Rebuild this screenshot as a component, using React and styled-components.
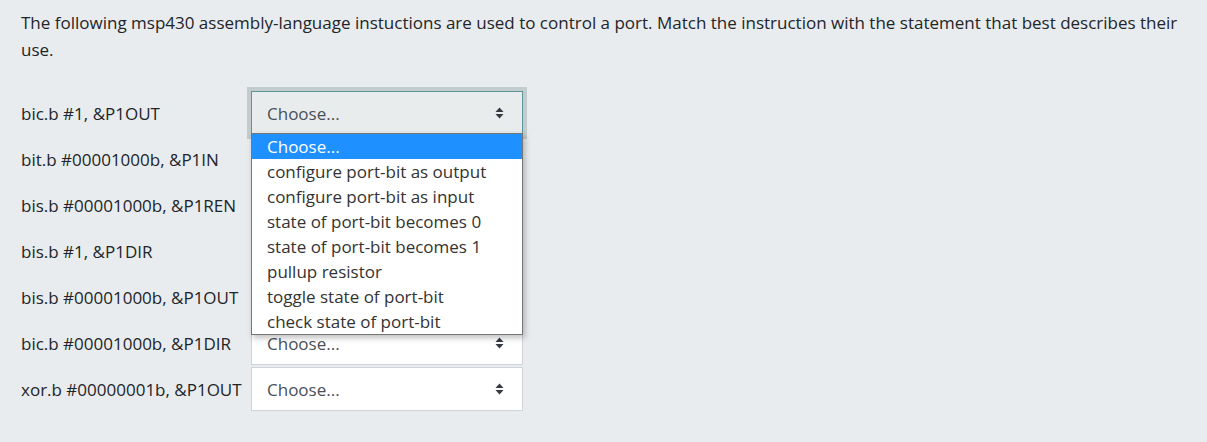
import React from "react";
import styled, { createGlobalStyle } from "styled-components";

const Global = createGlobalStyle`
  html, body { margin: 0; padding: 0; background: #e9ecef; }
  body { font-family: "Open Sans", "Noto Sans", sans-serif; color: #212529; }
`;

const Page = styled.div`
  width: 1207px;
  height: 442px;
  box-sizing: border-box;
  padding: 9px 21px 0 21px;
  background: #e9ecef;
  font-size: 17px;
  line-height: 27px;
  overflow: hidden;
`;

const Intro = styled.p`
  margin: 0 0 28px 0;
  color: #212529;
`;

const Grid = styled.div`
  position: relative;
  display: grid;
  grid-template-columns: 230px 272px;
  grid-auto-rows: 44px;
  row-gap: 2px;
  align-items: center;
`;

const Label = styled.div`
  color: #212529;
  white-space: nowrap;
`;

const SelectBox = styled.div`
  position: relative;
  box-sizing: border-box;
  height: 44px;
  display: flex;
  align-items: center;
  justify-content: space-between;
  padding: 0 18px 0 15px;
  border: 1px solid ${(p) => (p.$open ? "#5b969b" : "#ced4da")};
  background: ${(p) => (p.$open ? "#e9eced" : "#ffffff")};
  box-shadow: ${(p) => (p.$open ? "0 0 0 4px #c2cccd" : "none")};
  color: #495057;
  & > * {
    visibility: ${(p) => (p.$covered ? "hidden" : "visible")};
  }
`;

const Arrows = () => (
  <svg width="9" height="12" viewBox="0 0 9 12">
    <path d="M0.5 5 L4.5 0.5 L8.5 5 Z" fill="#343a40" />
    <path d="M0.5 7 L4.5 11.5 L8.5 7 Z" fill="#343a40" />
  </svg>
);

const List = styled.ul`
  position: absolute;
  left: 230px;
  top: 42px;
  width: 272px;
  box-sizing: border-box;
  margin: 0;
  padding: 0;
  list-style: none;
  background: #ffffff;
  border: 1px solid #767676;
  box-shadow: 2px 3px 6px rgba(0, 0, 0, 0.25);
  z-index: 2;
`;

const Option = styled.li`
  height: 25px;
  line-height: 25px;
  padding-left: 15px;
  white-space: nowrap;
  color: ${(p) => (p.$active ? "#ffffff" : "#333333")};
  background: ${(p) => (p.$active ? "#1e90ff" : "transparent")};
`;

const rows = [
  "bic.b #1, &P1OUT",
  "bit.b #00001000b, &P1IN",
  "bis.b #00001000b, &P1REN",
  "bis.b #1, &P1DIR",
  "bis.b #00001000b, &P1OUT",
  "bic.b #00001000b, &P1DIR",
  "xor.b #00000001b, &P1OUT",
];

const options = [
  "Choose...",
  "configure port-bit as output",
  "configure port-bit as input",
  "state of port-bit becomes 0",
  "state of port-bit becomes 1",
  "pullup resistor",
  "toggle state of port-bit",
  "check state of port-bit",
];

export default function App() {
  return (
    <>
      <Global />
      <Page>
        <Intro>
          The following msp430 assembly-language instuctions are used to control a port. Match the instruction with the statement that best describes their use.
        </Intro>
        <Grid>
          {rows.map((r, i) => (
            <React.Fragment key={r}>
              <Label>{r}</Label>
              <SelectBox $open={i === 0} $covered={i >= 1 && i <= 4}>
                <span>Choose...</span>
                <Arrows />
              </SelectBox>
            </React.Fragment>
          ))}
          <List>
            {options.map((o, i) => (
              <Option key={o} $active={i === 0}>
                {o}
              </Option>
            ))}
          </List>
        </Grid>
      </Page>
    </>
  );
}
